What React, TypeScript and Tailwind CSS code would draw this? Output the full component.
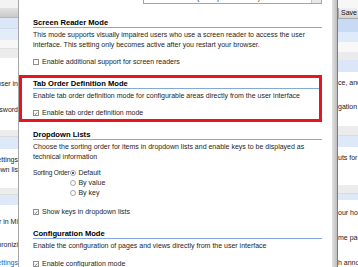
import React from 'react'

const font = { fontFamily: '"Liberation Sans", Arial, sans-serif' }

function Heading({ children }: { children: React.ReactNode }) {
  return (
    <div className="h-[11px] pt-[2px] border-b border-[#86a9dc] text-[7.6px] leading-[8px] font-bold text-black whitespace-nowrap">
      {children}
    </div>
  )
}

function Para({ children }: { children: React.ReactNode }) {
  return <div className="mt-[2px] text-[7px] leading-[10px] text-[#1e1e1e]">{children}</div>
}

function Check({ checked, label }: { checked?: boolean; label: string }) {
  return (
    <div className="flex items-center gap-[3px] h-[10px] text-[7px] text-[#1e1e1e] whitespace-nowrap">
      <span className="w-[6px] h-[6px] border border-[#8e8f8f] bg-white flex items-center justify-center shrink-0">
        {checked && (
          <svg viewBox="0 0 6 6" className="w-[5px] h-[5px]">
            <path d="M1 3 L2.4 4.4 L5 1.4" fill="none" stroke="#333" strokeWidth="0.9" />
          </svg>
        )}
      </span>
      <span>{label}</span>
    </div>
  )
}

function Radio({ checked, label }: { checked?: boolean; label: string }) {
  return (
    <div className="flex items-center gap-[2px] h-[10px] text-[7px] text-[#1e1e1e] whitespace-nowrap">
      <span className="w-[6px] h-[6px] rounded-full border border-[#a3a3a3] bg-white flex items-center justify-center shrink-0">
        {checked && <span className="w-[2px] h-[2px] rounded-full bg-[#222]" />}
      </span>
      <span>{label}</span>
    </div>
  )
}

function LeftPanel() {
  const line = (t: string, cls = 'text-[#222]') => (
    <div className={`h-[10px] flex justify-end overflow-hidden text-[7px] leading-[10px] whitespace-nowrap ${cls}`}>
      <span>{t}</span>
    </div>
  )
  return (
    <div className="w-[18px] shrink-0 overflow-hidden bg-white">
      <div className="h-[8px] bg-[#f3f3f3]" />
      <div className="h-[10px] bg-gradient-to-b from-[#e2e2e2] to-[#c9c9c9] border-b border-[#b8b8b8]" />
      <div className="h-[11px] bg-[#dbe7f8] border-b border-[#cfdcee]" />
      <div className="h-[11px] bg-[#e3edfa]" />
      <div className="h-[9px] bg-[#f7f7f7] border-b border-[#e2e2e2]" />
      <div className="h-[9px] bg-[#ececec]" />
      <div className="h-[21px]" />
      {line('Enable the interface for the user in')}
      <div className="h-[16px]" />
      {line('change password')}
      <div className="h-[15px]" />
      <div className="h-[7px] bg-[#ededed] border-b border-[#dcdcdc]" />
      <div className="h-[12px] bg-[#dde8f8]" />
      <div className="h-[6px]" />
      {line('Use these settings')}
      {line('in dropdown lis')}
      <div className="h-[13px]" />
      <div className="h-[7px] bg-[#ededed] border-b border-[#dcdcdc]" />
      <div className="h-[10px] bg-[#dde8f8]" />
      <div className="h-[12px]" />
      {line('Show the calendar in Mi')}
      <div className="h-[13px]" />
      {line('Enable synchronizi')}
      <div className="h-[8px]" />
      {line('Settings', 'text-[#2a5fb0]')}
    </div>
  )
}

function RightPanel() {
  const line = (t: string, cls = 'text-[#222]') => (
    <div className={`h-[10px] overflow-hidden text-[7px] leading-[10px] whitespace-nowrap ${cls}`}>{t}</div>
  )
  return (
    <div className="flex-1 overflow-hidden bg-white">
      <div className="h-[8px] bg-[#f7f7f7]" />
      <div className="h-[11px] bg-gradient-to-b from-[#f0f0f0] to-[#d4d4d4] border-b border-l border-[#a9a9a9] pl-[2px] text-[7px] leading-[10px] whitespace-nowrap text-[#111]">
        Save
      </div>
      <div className="h-[13px] bg-[#c9dbf4]" />
      <div className="h-[10px] bg-[#dfeafa]" />
      <div className="h-[10px] bg-[#f8f8f8]" />
      <div className="h-[8px] bg-[#ebebeb]" />
      <div className="h-[12px] bg-[#dbe7f8]" />
      <div className="h-[6px]" />
      {line('ce, and')}
      <div className="h-[14px]" />
      {line('gation')}
      <div className="h-[14px]" />
      <div className="h-[10px] bg-[#ececec] border-b border-[#dcdcdc]" />
      <div className="h-[11px] bg-[#dde8f8]" />
      <div className="h-[6px]" />
      {line('uts for')}
      <div className="h-[22px]" />
      <div className="h-[9px] bg-[#ececec] border-b border-[#dcdcdc]" />
      <div className="h-[6px] bg-[#dde8f8]" />
      <div className="h-[8px]" />
      {line('our home')}
      <div className="h-[15px]" />
      {line('me page')}
      <div className="h-[15px]" />
      {line('h announ')}
    </div>
  )
}

export default function App() {
  return (
    <div className="w-[358px] h-[267px] overflow-hidden flex bg-white" style={font}>
      <LeftPanel />
      <div className="w-px shrink-0 bg-[#a7a7a7]" />
      <div className="w-[313px] shrink-0 bg-white pl-[14px] pr-[10px]">
        <div className="-mt-[8px] h-[12px] flex items-center">
          <span className="w-[110px] text-right pr-[10px] text-[7px] text-[#1e1e1e] whitespace-nowrap">Time Format:</span>
          <div className="flex-1 h-[12px] border border-[#a5a5a5] flex items-center">
            <span className="flex-1 pl-[2px] text-[7px] text-[#1e1e1e] whitespace-nowrap">24 Hour Format (Example: 12:05:10)</span>
            <span className="w-[10px] h-full bg-[#e8e8e8] border-l border-[#c4c4c4]" />
          </div>
        </div>

        <div className="mt-[13px]">
          <Heading>Screen Reader Mode</Heading>
          <Para>
            This mode supports visually impaired users who use a screen reader to access the user interface. This
            setting only becomes active after you restart your browser.
          </Para>
          <div className="mt-[7px]">
            <Check label="Enable additional support for screen readers" />
          </div>
        </div>

        <div className="mt-[8px] -ml-[14px] border-[3px] border-[#e8141e] pl-[11px] pb-[1px]">
          <Heading>Tab Order Definition Mode</Heading>
          <Para>Enable tab order definition mode for configurable areas directly from the user interface</Para>
          <div className="mt-[7px]">
            <Check checked label="Enable tab order definition mode" />
          </div>
        </div>

        <div className="mt-[7px]">
          <Heading>Dropdown Lists</Heading>
          <Para>
            Choose the sorting order for items in dropdown lists and enable keys to be displayed as technical
            information
          </Para>
          <div className="mt-[6px] flex gap-[1px]">
            <div className="h-[10px] text-[6.5px] tracking-[-0.2px] leading-[10px] text-[#1e1e1e] whitespace-nowrap">Sorting Order</div>
            <div className="flex flex-col">
              <Radio checked label="Default" />
              <Radio label="By value" />
              <Radio label="By key" />
            </div>
          </div>
          <div className="mt-[9px]">
            <Check checked label="Show keys in dropdown lists" />
          </div>
        </div>

        <div className="mt-[11px]">
          <Heading>Configuration Mode</Heading>
          <Para>Enable the configuration of pages and views directly from the user interface</Para>
          <div className="mt-[8px]">
            <Check checked label="Enable configuration mode" />
          </div>
        </div>
      </div>
      <div className="w-[6px] shrink-0 bg-gradient-to-r from-[#e2e2e2] to-[#bdbdbd] border-r border-[#7d7d7d]" />
      <RightPanel />
    </div>
  )
}
